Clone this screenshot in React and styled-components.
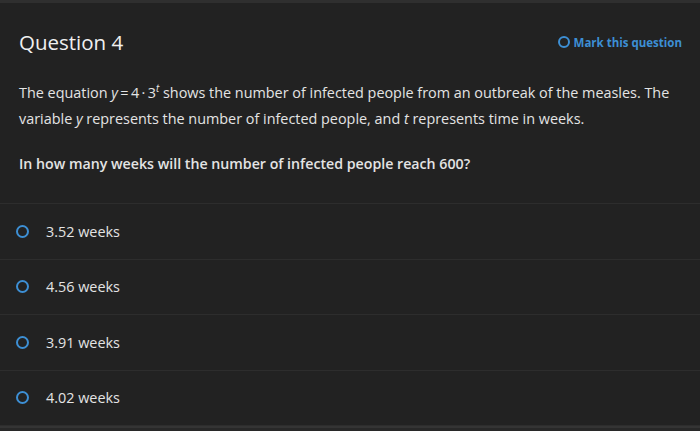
import React from 'react';
import styled, {createGlobalStyle} from 'styled-components';

const Global = createGlobalStyle`
  html, body {
    margin: 0;
    padding: 0;
    background: #222222;
  }
  body {
    font-family: "Open Sans", Lato, sans-serif;
    color: #e4e4e4;
  }
`

const Page = styled.div`
  width: 700px;
  height: 431px;
  box-sizing: border-box;
  border-top: 3px solid #2f2f2f;
  background: #222222;
  display: flex;
  flex-direction: column;
  overflow: hidden;
`

const Header = styled.div`
  display: flex;
  align-items: center;
  justify-content: space-between;
  padding: 25px 18px 0 19px;
  height: 28px;
`

const Title = styled.h2`
  margin: 0;
  font-size: 20.5px;
  font-weight: 500;
  color: #f0f0f0;
`

const MarkButton = styled.div`
  display: flex;
  align-items: center;
  gap: 4px;
  color: #3d8fd4;
  font-size: 11.5px;
  font-weight: 700;
`

const Ring = styled.span`
  box-sizing: border-box;
  width: ${p => p.size}px;
  height: ${p => p.size}px;
  border-radius: 50%;
  border: 2px solid #3d8fd4;
  flex-shrink: 0;
`

const Body = styled.div`
  padding: 24px 19px 0 19px;
  font-size: 14.4px;
  line-height: 26px;
`

const Para = styled.p`
  margin: 0;
`

const Var = styled.i`
  font-style: italic;
`

const Sup = styled.sup`
  font-size: 10px;
  font-style: italic;
  vertical-align: 6px;
  line-height: 0;
`

const Ask = styled.p`
  margin: 19px 0 0 0;
  font-size: 14.2px;
  font-weight: 600;
`

const Options = styled.div`
  margin-top: 26px;
  border-top: 1px solid #2d2d2d;
  display: flex;
  flex-direction: column;
`

const Option = styled.div`
  height: 55.5px;
  box-sizing: border-box;
  border-bottom: 1px solid #2d2d2d;
  display: flex;
  align-items: center;
  gap: 17px;
  padding-left: 16px;
  font-size: 14.4px;
`

const Footer = styled.div`
  flex: 1;
  border-top: 2px solid #343434;
  background: #282828;
`

const answers = ['3.52 weeks', '4.56 weeks', '3.91 weeks', '4.02 weeks'];

export default function App() {
  return (
    <Page>
      <Global />
      <Header>
        <Title>Question 4</Title>
        <MarkButton>
          <Ring size={12} />
          Mark this question
        </MarkButton>
      </Header>
      <Body>
        <Para>
          The equation <Var>y</Var>{'\u2009=\u20094\u2009·\u20093'}<Sup>t</Sup> shows the number of infected people from an outbreak of the measles. The
          variable <Var>y</Var> represents the number of infected people, and <Var>t</Var> represents time in weeks.
        </Para>
        <Ask>In how many weeks will the number of infected people reach 600?</Ask>
      </Body>
      <Options>
        {answers.map(a => (
          <Option key={a}>
            <Ring size={13} />
            {a}
          </Option>
        ))}
      </Options>
      <Footer />
    </Page>
  )
}
